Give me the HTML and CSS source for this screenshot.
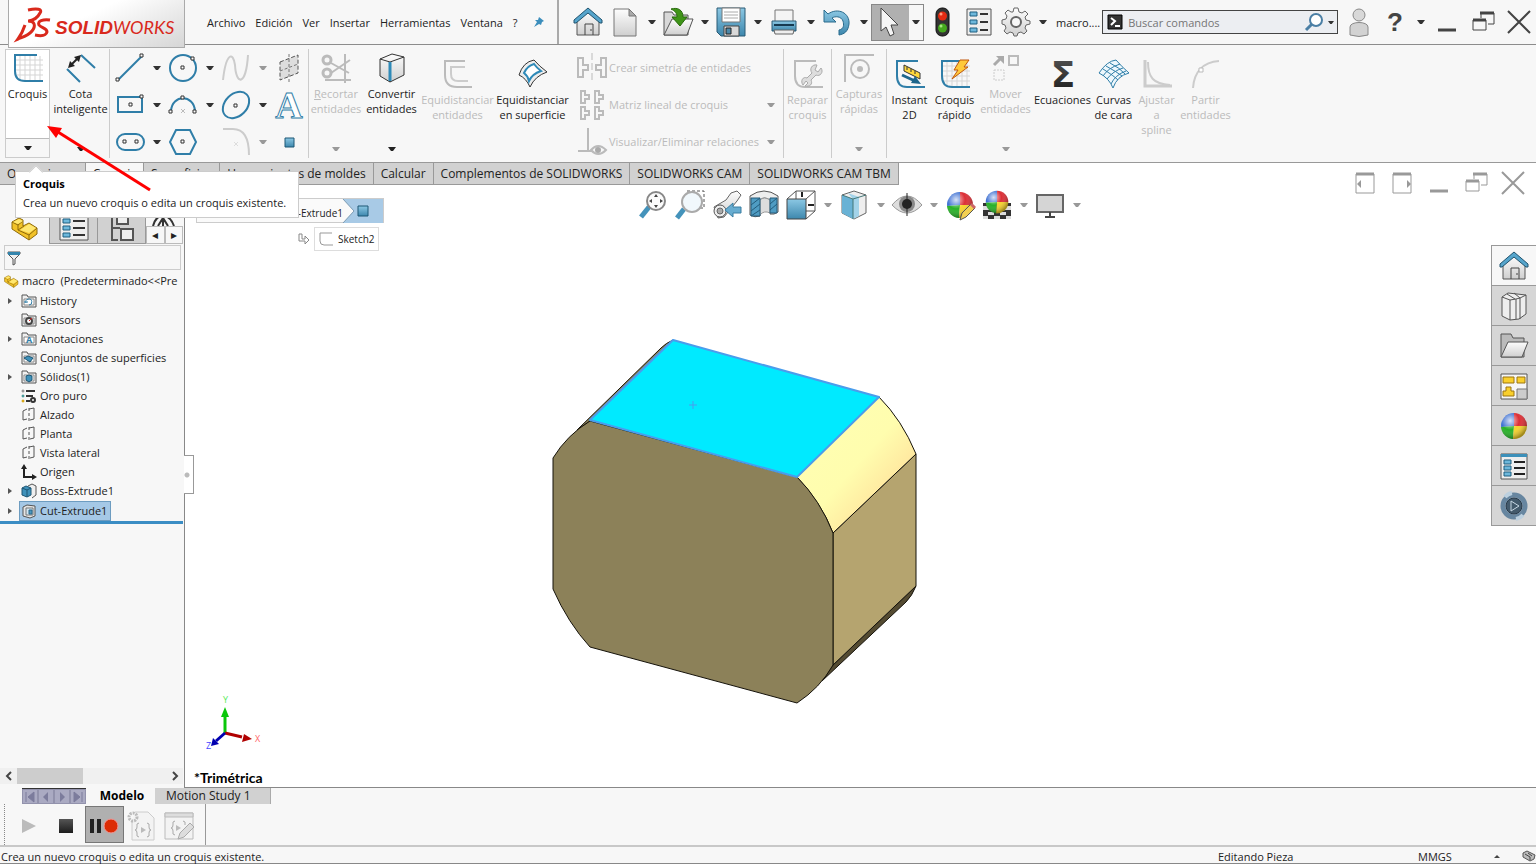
FILE: index.html
```html
<!DOCTYPE html>
<html lang="es">
<head>
  <meta charset="UTF-8">
  <title>SOLIDWORKS - macro</title>
  <link rel="stylesheet" href="styles.css">
</head>
<body>
  <!-- shared gradients and icons -->
  <svg class="defs" width="0" height="0" aria-hidden="true">
    <defs>
      <linearGradient id="blue" x1="0" y1="0" x2="0" y2="1"><stop offset="0" stop-color="#8cc8e4"/><stop offset="1" stop-color="#3d87ad"/></linearGradient>
      <linearGradient id="gray" x1="0" y1="0" x2="0" y2="1"><stop offset="0" stop-color="#fdfdfd"/><stop offset="1" stop-color="#cfcfcf"/></linearGradient>
      <linearGradient id="dark" x1="0" y1="0" x2="0" y2="1"><stop offset="0" stop-color="#555"/><stop offset="1" stop-color="#1c1c1c"/></linearGradient>
      <linearGradient id="gold" x1="0" y1="0" x2="1" y2="1"><stop offset="0" stop-color="#ffffb4"/><stop offset="0.5" stop-color="#fffdae"/><stop offset="0.8" stop-color="#ffe09a"/></linearGradient>
      <radialGradient id="shine" cx="0.35" cy="0.3" r="0.7"><stop offset="0" stop-color="#fff" stop-opacity="0.8"/><stop offset="0.5" stop-color="#fff" stop-opacity="0"/><stop offset="1" stop-color="#000" stop-opacity="0.35"/></radialGradient>
      <symbol id="dd" viewBox="0 0 8 4"><path d="M0 0H8L5 4H3Z" fill="currentColor"/></symbol>
      <symbol id="home" viewBox="0 0 30 30"><path d="M4 14V28H26V14L15 4Z" fill="url(#gray)" stroke="#555"/><path d="M12 28V17H20V28M18 22V24" fill="none" stroke="#444"/><path d="M1 16V13L15 1L29 13V16H27L15 6L3 16Z" fill="#56a5cc" stroke="#20536e"/></symbol>
      <symbol id="ball" viewBox="0 0 30 30"><path d="M15 15V2A13 13 0 0 0 2 16Z" fill="#3c6fd2"/><path d="M15 15V2A13 13 0 0 1 28 15Z" fill="#dc2f36"/><path d="M15 15L2 16A13 13 0 0 0 14 28Z" fill="#28b128"/><path d="M15 15L28 15A13 13 0 0 1 14 28Z" fill="#f7d32c"/><circle cx="15" cy="15" r="13" fill="url(#shine)"/></symbol>
      <symbol id="list" viewBox="0 0 30 30"><path d="M3 2H27V28H3Z" fill="#eee" stroke="#555"/><path d="M6 5H13V9H6ZM6 13H13V17H6ZM6 21H13V25H6Z" fill="#6db8dc" stroke="#1e5f80"/><path d="M16 7H24M16 15H24M16 23H24" stroke="#333" stroke-width="2"/></symbol>
      <symbol id="restore" viewBox="0 0 30 30"><path d="M13 11V6H26V17H20M5 13H18V23H5Z" fill="none" stroke="currentColor"/><path d="M12 6H26M5 13H18" stroke="currentColor" stroke-width="3"/></symbol>
      <symbol id="close" viewBox="0 0 30 30"><path d="M4 4L26 26M26 4L4 26" stroke="currentColor" stroke-width="2"/></symbol>
      <symbol id="min" viewBox="0 0 30 30"><path d="M6 23H24" stroke="currentColor" stroke-width="3"/></symbol>
      <symbol id="part" viewBox="0 0 28 28"><path d="M1 9L8 5L12 7V13L18 10L26 15V21L18 27L1 16Z" fill="#f2c228" stroke="#8d6a0c"/><path d="M1 9L7 12V17L18 22V27M7 12L12 8M18 22L26 15M7 17L13 13" fill="none" stroke="#8d6a0c"/><path d="M2 9L8 6L12 8L7 11ZM9 17L18 11L25 15L18 20Z" fill="#ffe770"/></symbol>
      <symbol id="folder" viewBox="0 0 16 16"><path d="M1 2H6L7 4H15V14H1Z" fill="#f0f0f0" stroke="#555"/><path d="M3 6H13V12H3Z" fill="#fff" stroke="#888"/></symbol>
      <symbol id="plane" viewBox="0 0 16 16"><path d="M6 2L2 4V13L6 12M8 2L13 1V12L9 13" fill="none" stroke="#555"/><path d="M8 1V15" stroke="#555" stroke-dasharray="3 2"/></symbol>
      <symbol id="tri" viewBox="0 0 4 6"><path d="M0 0L4 3L0 6Z" fill="#555"/></symbol>
    </defs>
  </svg>

  <header class="titlebar">
    <a class="logo" href="#">
      <svg width="34" height="34" viewBox="0 0 34 34" fill="none" stroke="#d9291c"><path d="M11 3C20 1 26 2 23 6C21 10 17 13 12 14" stroke-width="3"/><path d="M11 14C18 14 19 19 15 24C11 29 6 30 1 32C4 28 6 24 8 18" stroke-width="3"/><path d="M33 13C26 12 20 14 22 18C24 21 30 21 30 25C29 29 23 29 18 28" stroke-width="3"/></svg>
      <span class="wordmark"><b>SOLID</b>WORKS</span>
    </a>
    <nav class="menu">
      <a href="#">Archivo</a><a href="#">Edición</a><a href="#">Ver</a><a href="#">Insertar</a><a href="#">Herramientas</a><a href="#">Ventana</a><a href="#">?</a>
      <svg class="pin" width="12" height="12" viewBox="0 0 12 12"><path d="M6 1L11 5L9 6L8 9L6 8L1 11L4 6L2 4L5 4Z" fill="#3c8ebc"/></svg>
    </nav>
    <div class="quick">
      <button aria-label="Inicio"><svg class="ic"><use href="#home"/></svg></button>
      <button class="new" aria-label="Nuevo"><svg class="ic" viewBox="0 0 30 30"><path d="M4 2H19L26 9V29H4Z" fill="url(#gray)" stroke="#777"/><path d="M19 2V9H26Z" fill="#aaa" stroke="#777"/></svg></button>
      <button class="dd" aria-label="Más"><svg><use href="#dd"/></svg></button>
      <button aria-label="Abrir"><svg class="ic" viewBox="0 0 30 30"><path d="M1 28V5H9L11 8H25V28Z" fill="#d8d8d8" stroke="#555"/><path d="M1 28L9 12H30L24 28Z" fill="url(#gray)" stroke="#555"/><path d="M8 2C15 0 20 3 20 10H24L17 19L9 10H14C14 6 12 4 8 2Z" fill="#3f9418" stroke="#276a0b"/></svg></button>
      <button class="dd" aria-label="Más"><svg><use href="#dd"/></svg></button>
      <button aria-label="Guardar"><svg class="ic" viewBox="0 0 30 30"><path d="M1 1H29V29H5L1 25Z" fill="url(#blue)" stroke="#2a5a75"/><path d="M6 1H24V15H6Z" fill="#fff" stroke="#777"/><path d="M8 5H22M8 8H22M8 11H22" stroke="#aaa"/><path d="M8 19H23V29H8Z" fill="#d9d9d9" stroke="#444"/><path d="M10 21H15V27H10Z" fill="#4d88a8" stroke="#222"/></svg></button>
      <button class="dd" aria-label="Más"><svg><use href="#dd"/></svg></button>
      <button aria-label="Imprimir"><svg class="ic" viewBox="0 0 30 30"><path d="M6 15V3H24V15" fill="#f4f4f4" stroke="#777"/><path d="M3 14H27V24H3Z" fill="url(#blue)" stroke="#2a5a75"/><path d="M5 18H25" stroke="#173a50" stroke-width="2"/><path d="M5 23H25L24 27H6Z" fill="#eee" stroke="#666"/></svg></button>
      <button class="dd" aria-label="Más"><svg><use href="#dd"/></svg></button>
      <button aria-label="Deshacer"><svg class="ic" viewBox="0 0 30 30"><path d="M2 3L6 7C16 0 28 6 27 17C26 25 22 27 17 28V23C22 22 22 18 21 14C19 9 13 9 10 11L14 15L2 15Z" fill="url(#blue)" stroke="#296a8c"/></svg></button>
      <button class="dd" aria-label="Más"><svg><use href="#dd"/></svg></button>
      <span class="select">
        <button class="pressed" aria-label="Seleccionar"><svg class="ic" viewBox="0 0 30 30"><path d="M7 1V24L12 20L16 29L20 27L17 18H24Z" fill="#f5f5f5" stroke="#444"/></svg></button>
        <button class="dd" aria-label="Más"><svg><use href="#dd"/></svg></button>
      </span>
      <button aria-label="Reconstruir"><svg class="ic" viewBox="0 0 30 30"><rect x="9" y="1" width="13" height="28" rx="6" fill="#333" stroke="#111"/><circle cx="15.500" cy="9" r="4.500" fill="#e32b12"/><circle cx="15.500" cy="21" r="4.500" fill="#45a81d"/><circle cx="14" cy="7" r="1.500" fill="#ff9c80"/><circle cx="14" cy="19" r="1.500" fill="#a3e87f"/></svg></button>
      <button class="spaced" aria-label="Propiedades"><svg class="ic"><use href="#list"/></svg></button>
      <button class="spaced" aria-label="Opciones"><svg class="ic" viewBox="0 0 30 30"><path d="M13 1H17L18 5L21 6L24 4L27 7L24 10L25 13L29 14V17L25 18L24 21L26 24L23 27L20 25L17 26L16 29H13L12 26L9 25L6 27L3 24L5 21L4 18L1 17V13L5 12L6 9L4 6L7 3L10 5L12 5Z" fill="url(#gray)" stroke="#666"/><circle cx="15" cy="15" r="5" fill="#f7f7f7" stroke="#666" stroke-width="2"/></svg></button>
      <button class="dd" aria-label="Más"><svg><use href="#dd"/></svg></button>
    </div>
    <span class="doc">macro....</span>
    <form class="search">
      <svg width="16" height="16" viewBox="0 0 16 16"><path d="M1 1H15V15H1Z" fill="#333" stroke="#000"/><path d="M4 4L8 7L4 11M8 12H13" fill="none" stroke="#fff" stroke-width="2"/></svg>
      <input type="text" placeholder="Buscar comandos" aria-label="Buscar comandos">
      <svg width="20" height="20" viewBox="0 0 20 20"><path d="M8 12L2 18" stroke="#4b7fa5" stroke-width="3"/><circle cx="12" cy="8" r="6" fill="#fff" stroke="#4b7fa5" stroke-width="2"/></svg>
      <button class="dd" type="button" aria-label="Más"><svg><use href="#dd"/></svg></button>
    </form>
    <div class="window">
      <button aria-label="Usuario"><svg class="ic" viewBox="0 0 30 30"><path d="M6 28V20C6 14 24 14 24 20V28Q15 31 6 28Z" fill="#d2d2d2" stroke="#888"/><circle cx="15" cy="8" r="6" fill="#d8d8d8" stroke="#888"/></svg></button>
      <button class="help" aria-label="Ayuda">?</button>
      <button class="dd" aria-label="Más"><svg><use href="#dd"/></svg></button>
      <button aria-label="Minimizar"><svg class="ic"><use href="#min"/></svg></button>
      <button aria-label="Restaurar"><svg class="ic"><use href="#restore"/></svg></button>
      <button aria-label="Cerrar"><svg class="ic"><use href="#close"/></svg></button>
    </div>
  </header>

  <div class="ribbon">
    <div class="group first">
      <button class="cmd narrow hot"><svg class="ic" viewBox="0 0 30 30"><path d="M7 3V27M12 3V27M17 3V27M22 3V27M27 3V27M3 7H30M3 12H30M3 17H30M3 22H30" stroke="#d5d5d5"/><path d="M24 2H2V18Q2 28 12 28H30" fill="none" stroke="#2f7ea8" stroke-width="2"/></svg>Croquis<span class="drop"><svg><use href="#dd"/></svg></span></button>
      <button class="cmd wide"><svg class="ic" viewBox="0 0 30 30"><path d="M15 2L29 15M1 16L14 29" stroke="#2f7ea8" stroke-width="2"/><path d="M4 13L13 4" stroke="#222" stroke-width="2"/><path d="M2 15L4 8L9 13ZM15 2L13 9L8 4Z" fill="#222"/></svg>Cota<br>inteligente<span class="drop"><svg><use href="#dd"/></svg></span></button>
    </div>
    <div class="group tools">
      <button aria-label="Línea"><svg class="ic" viewBox="0 0 30 30"><path d="M3 27L27 3" stroke="#2f7ea8" stroke-width="2"/><path d="M1 25H4V28H1ZM25 1H28V4H25Z" fill="#fff" stroke="#333"/></svg></button>
      <button class="dd" aria-label="Más"><svg><use href="#dd"/></svg></button>
      <button aria-label="Círculo"><svg class="ic" viewBox="0 0 30 30"><circle cx="15" cy="15" r="13" fill="none" stroke="#2f7ea8" stroke-width="2"/><path d="M13 13H16V16H13ZM23 4H26V7H23Z" fill="#fff" stroke="#333"/></svg></button>
      <button class="dd" aria-label="Más"><svg><use href="#dd"/></svg></button>
      <button disabled aria-label="Spline"><svg class="ic" viewBox="0 0 30 30"><path d="M2 27C5 0 12 -2 14 12C15 32 25 34 27 2" fill="none" stroke="#ccc" stroke-width="2"/></svg></button>
      <button class="dd" disabled aria-label="Más"><svg><use href="#dd"/></svg></button>
      <button aria-label="Plano"><svg class="ic" viewBox="0 0 30 30"><path d="M6 9L24 2V20L6 27Z" fill="#ddd" stroke="#555" stroke-dasharray="4 2"/><path d="M15 1V29M6 18L24 11" stroke="#777" stroke-dasharray="3 2"/></svg></button>

      <button aria-label="Rectángulo"><svg class="ic" viewBox="0 0 30 30"><path d="M3 7H27V22H3Z" fill="none" stroke="#2f7ea8" stroke-width="2"/><path d="M14 13H17V16H14ZM25 5H28V8H25Z" fill="#fff" stroke="#333"/></svg></button>
      <button class="dd" aria-label="Más"><svg><use href="#dd"/></svg></button>
      <button aria-label="Arco"><svg class="ic" viewBox="0 0 30 30"><path d="M3 21C4 4 26 4 27 21" fill="none" stroke="#2f7ea8" stroke-width="2"/><path d="M13 6H16V9H13ZM1 20H4V23H1ZM25 20H28V23H25Z" fill="#fff" stroke="#333"/><path d="M13 19L17 23M17 19L13 23" stroke="#bbb"/></svg></button>
      <button class="dd" aria-label="Más"><svg><use href="#dd"/></svg></button>
      <button aria-label="Elipse"><svg class="ic" viewBox="0 0 30 30"><ellipse cx="15" cy="15" rx="15" ry="11" transform="rotate(-45 15 15)" fill="none" stroke="#2f7ea8" stroke-width="2"/><path d="M13 14H16V17H13Z" fill="#fff" stroke="#333"/></svg></button>
      <button class="dd" aria-label="Más"><svg><use href="#dd"/></svg></button>
      <button aria-label="Texto"><svg class="ic" viewBox="0 0 30 30"><text x="15" y="28" text-anchor="middle" font-family="Liberation Serif, serif" font-weight="bold" font-size="38" fill="#fff" stroke="#2f7ea8">A</text></svg></button>

      <button aria-label="Ranura"><svg class="ic" viewBox="0 0 30 30"><rect x="2" y="7" width="27" height="16" rx="8" fill="none" stroke="#2f7ea8" stroke-width="2"/><path d="M8 13H11V16H8ZM20 13H23V16H20Z" fill="#fff" stroke="#333"/></svg></button>
      <button class="dd" aria-label="Más"><svg><use href="#dd"/></svg></button>
      <button aria-label="Polígono"><svg class="ic" viewBox="0 0 30 30"><path d="M8 3H22L28 15L22 27H8L2 15Z" fill="none" stroke="#2f7ea8" stroke-width="2"/><path d="M13 13H16V16H13Z" fill="#fff" stroke="#333"/></svg></button>
      <span></span>
      <button disabled aria-label="Redondeo"><svg class="ic" viewBox="0 0 30 30"><path d="M2 2H12C24 2 28 12 28 28" fill="none" stroke="#ccc" stroke-width="2"/><path d="M13 15L17 19M17 15L13 19" stroke="#ddd"/></svg></button>
      <button class="dd" disabled aria-label="Más"><svg><use href="#dd"/></svg></button>
      <button aria-label="Punto"><svg class="ic" viewBox="0 0 30 30"><path d="M11 11H20V20H11Z" fill="url(#blue)" stroke="#1c5675"/></svg></button>
    </div>
    <div class="group">
      <button class="cmd middle" disabled><svg class="ic" viewBox="0 0 30 30"><path d="M10 10L28 20M10 20L29 7M4 27H30M24 1V30" stroke="#bbb" stroke-width="2"/><circle cx="6" cy="7" r="4" fill="none" stroke="#bbb" stroke-width="3"/><circle cx="6" cy="20" r="4" fill="none" stroke="#bbb" stroke-width="3"/></svg><span><u>R</u>ecortar</span>entidades<span class="drop"><svg><use href="#dd"/></svg></span></button>
      <button class="cmd wide"><svg class="ic" viewBox="0 0 30 30"><path d="M3 6L15 1L27 4V22L13 29L3 23Z" fill="url(#gray)" stroke="#333"/><path d="M3 6L13 9L27 4M13 9V29" fill="none" stroke="#333"/><path d="M13 9V28" stroke="#2f8ab8" stroke-width="3"/></svg>Convertir<br>entidades<span class="drop"><svg><use href="#dd"/></svg></span></button>
      <button class="cmd low wider" disabled><svg class="ic" viewBox="0 0 30 30"><path d="M22 2H2V16Q2 28 14 28H29" fill="none" stroke="#bbb" stroke-width="2"/><path d="M22 8H8V15Q8 22 15 22H25" fill="none" stroke="#ccc" stroke-width="2"/></svg>Equidistanciar<br>entidades</button>
      <button class="cmd low wider"><svg class="ic" viewBox="0 0 30 30"><path d="M1 16Q5 3 16 1Q21 7 29 13Q17 17 12 28Q8 19 1 16Z" fill="#eee" stroke="#333"/><path d="M6 14Q9 7 16 5Q19 9 23 12Q14 15 11 22Q10 17 6 14Z" fill="#fff" stroke="#2f8ab8" stroke-width="2"/></svg>Equidistanciar<br>en superficie</button>
      <div class="rows">
        <button disabled><svg class="ic" viewBox="0 0 30 30"><path d="M1 5H6V12H11V17H6V24H1ZM29 5H24V12H19V17H24V24H29Z" fill="none" stroke="#bbb" stroke-width="2"/><path d="M15 0V30" stroke="#bbb" stroke-dasharray="7 3"/></svg><span>Crear simetría de entidades</span></button>
        <button disabled><svg class="ic" viewBox="0 0 30 30"><path d="M4 1H8V5H12V9H8V13H4ZM18 1H22V5H26V9H22V13H18ZM4 17H8V21H12V25H8V29H4ZM18 17H22V21H26V25H22V29H18Z" fill="none" stroke="#bbb" stroke-width="2"/></svg><span>Matriz lineal de croquis</span><svg class="tip"><use href="#dd"/></svg></button>
        <button disabled><svg class="ic" viewBox="0 0 30 30"><path d="M11 1V24M1 24H15" stroke="#bbb" stroke-width="2"/><path d="M14 23Q21 15 29 23Q21 31 14 23Z" fill="none" stroke="#bbb" stroke-width="2"/><circle cx="21" cy="23" r="3" fill="#aaa"/></svg><span>Visualizar/Eliminar relaciones</span><svg class="tip"><use href="#dd"/></svg></button>
      </div>
    </div>
    <div class="group padded">
      <button class="cmd low narrow" disabled><svg class="ic" viewBox="0 0 30 30"><path d="M23 2H2V17Q2 28 12 28H30" fill="none" stroke="#bbb" stroke-width="2"/><path d="M24 6C19 5 16 10 19 14L14 19C10 17 7 22 10 26L13 22L15 24L12 27C17 28 20 25 18 21L23 16C27 18 31 13 28 9L25 13L22 11Z" fill="#ddd" stroke="#aaa"/></svg>Reparar<br>croquis</button>
    </div>
    <div class="group">
      <button class="cmd middle" disabled><svg class="ic" viewBox="0 0 30 30"><path d="M1 29V2H30" fill="none" stroke="#bbb" stroke-width="2"/><circle cx="16" cy="16" r="9" fill="none" stroke="#bbb" stroke-width="2"/><circle cx="16" cy="16" r="3" fill="#bbb"/></svg>Capturas<br>rápidas<span class="drop"><svg><use href="#dd"/></svg></span></button>
    </div>
    <div class="group">
      <button class="cmd low narrow"><svg class="ic" viewBox="0 0 30 30"><path d="M23 2H2V17Q2 28 12 28H30" fill="none" stroke="#2f7ea8" stroke-width="2"/><path d="M9 6L25 14V20L9 12Z" fill="#ffd83c" stroke="#333"/><path d="M12 8V11M16 10V13M20 12V15" stroke="#333"/><path d="M7 16L20 22" stroke="#1d668c" stroke-width="3"/><path d="M26 25L16 24L20 17Z" fill="#1d668c"/></svg>Instant<br>2D</button>
      <button class="cmd low narrow"><svg class="ic" viewBox="0 0 30 30"><path d="M7 3V27M12 3V27M17 3V27M22 3V27M27 3V27M3 7H30M3 12H30M3 17H30M3 22H30" stroke="#d5d5d5"/><path d="M20 2H2V17Q2 28 12 28H30" fill="none" stroke="#2f7ea8" stroke-width="2"/><path d="M20 1H29L24 8H28L12 20L18 11H14Z" fill="#ffc93a" stroke="#c0560c"/></svg>Croquis<br>rápido</button>
      <button class="cmd wide" disabled><svg class="ic" viewBox="0 0 30 30"><path d="M18 3H27V12H18Z" fill="none" stroke="#bbb" stroke-width="2"/><path d="M3 12L9 6" stroke="#aaa" stroke-width="3"/><path d="M5 3H13V11Z" fill="#aaa"/><path d="M3 17H13V27H3Z" fill="none" stroke="#ccc" stroke-dasharray="2 1"/></svg>Mover<br>entidades<span class="drop"><svg><use href="#dd"/></svg></span></button>
      <button class="cmd low wide"><svg class="ic" viewBox="0 0 30 30"><text x="15" y="28" text-anchor="middle" font-family="DejaVu Sans, sans-serif" font-weight="bold" font-size="36" fill="url(#dark)">Σ</text></svg>Ecuaciones</button>
      <button class="cmd low narrow"><svg class="ic" viewBox="0 0 30 30"><path d="M0 14Q8 2 17 1Q23 8 30 14Q18 17 14 29Q10 19 0 14Z" fill="#edf7fc" stroke="#2f7ea8"/><path d="M4 10Q15 17 19 21M7 7Q18 13 23 17M11 4Q21 9 26 15M4 17Q9 9 21 5M8 20Q14 12 24 9M12 25Q16 16 27 12" fill="none" stroke="#2f7ea8"/></svg>Curvas<br>de cara</button>
      <button class="cmd low slim" disabled><svg class="ic" viewBox="0 0 30 30"><path d="M3 1V27H30" fill="none" stroke="#ccc" stroke-width="3"/><path d="M6 3C6 18 11 25 28 26" fill="none" stroke="#ccc" stroke-width="2"/></svg>Ajustar<br>a<br>spline</button>
      <button class="cmd low wide" disabled><svg class="ic" viewBox="0 0 30 30"><path d="M2 29C3 13 12 3 28 2" fill="none" stroke="#ccc" stroke-width="2"/><path d="M8 9H12V13H8Z" fill="#fff" stroke="#bbb"/></svg>Partir<br>entidades</button>
    </div>
  </div>

  <nav class="tabs">
    <a href="#">Operaciones</a><a href="#" class="active">Croquis</a><a href="#">Superficies</a><a href="#">Herramientas de moldes</a><a href="#">Calcular</a><a href="#">Complementos de SOLIDWORKS</a><a href="#">SOLIDWORKS CAM</a><a href="#">SOLIDWORKS CAM TBM</a>
  </nav>

  <main class="workspace">
    <aside class="panel">
      <div class="panel-tabs">
        <button class="active" aria-label="Árbol"><svg width="28" height="28"><use href="#part"/></svg></button>
        <button aria-label="Propiedades"><svg width="30" height="28" viewBox="0 0 30 28"><path d="M1 1H29V25H1Z" fill="#eee" stroke="#555"/><path d="M4 4H11V8H4ZM4 11H11V15H4ZM4 18H11V22H4Z" fill="#6db8dc" stroke="#1e5f80"/><path d="M14 6H26M14 13H26M14 20H26" stroke="#333" stroke-width="2"/></svg></button>
        <button aria-label="Configuraciones"><svg width="28" height="28" viewBox="0 0 28 28"><path d="M4 2V25H10M4 13H12" fill="none" stroke="#555" stroke-width="2"/><path d="M9 2H20V9H9ZM13 14H25V25H13Z" fill="#eee" stroke="#555" stroke-width="2"/></svg></button>
        <div class="more">
          <svg width="34" height="12" viewBox="0 0 34 12"><path d="M7 12Q9 3 17 1Q25 3 28 12M17 1V12M12 12L17 4L22 12" fill="none" stroke="#333" stroke-width="2"/></svg>
          <div class="spin"><button aria-label="Anterior">◂</button><button aria-label="Siguiente">▸</button></div>
        </div>
      </div>
      <div class="filter"><svg width="14" height="16" viewBox="0 0 14 16"><path d="M1 2H13V4L8 9V14L6 15V9L1 4Z" fill="#eee" stroke="#555"/><path d="M1 2H13V5H1Z" fill="#3485ad"/></svg><input type="text" aria-label="Filtro"></div>
      <p class="root"><svg width="15" height="15"><use href="#part"/></svg>macro&nbsp; (Predeterminado&lt;&lt;Pre</p>
      <ul class="tree">
        <li class="open"><svg class="twig"><use href="#tri"/></svg><span><svg width="16" height="16"><use href="#folder"/><path d="M5 10A3 3 0 1 1 8 12M3 9H7" fill="none" stroke="#2f7ea8"/></svg>History</span></li>
        <li><span><svg width="16" height="16"><use href="#folder"/><circle cx="8" cy="9" r="3" fill="#fff" stroke="#444" stroke-width="2"/><path d="M8 9L11 6" stroke="#d22"/></svg>Sensors</span></li>
        <li class="open"><svg class="twig"><use href="#tri"/></svg><span><svg width="16" height="16"><use href="#folder"/><text x="8" y="12" text-anchor="middle" font-size="9" font-weight="bold" fill="#2f7ea8">A</text></svg>Anotaciones</span></li>
        <li><span><svg width="16" height="16"><use href="#folder"/><path d="M3 8L7 6L12 8L9 12Z" fill="#3f91ba" stroke="#1d5674"/></svg>Conjuntos de superficies</span></li>
        <li class="open"><svg class="twig"><use href="#tri"/></svg><span><svg width="16" height="16"><use href="#folder"/><path d="M5 7L8 6L11 7V11L8 13L5 11Z" fill="#3f91ba" stroke="#1d5674"/></svg>Sólidos(1)</span></li>
        <li><span><svg width="16" height="16"><path d="M5 3H14M5 8H12M5 13H9" stroke="#333" stroke-width="2"/><circle cx="2" cy="3" r="1" fill="#fff" stroke="#777"/><circle cx="2" cy="8" r="1" fill="#6cc" stroke="#388"/><circle cx="2" cy="13" r="1" fill="#fc3" stroke="#c90"/><circle cx="12" cy="12" r="2" fill="none" stroke="#333" stroke-width="2"/></svg>Oro puro</span></li>
        <li><span><svg width="16" height="16"><use href="#plane"/></svg>Alzado</span></li>
        <li><span><svg width="16" height="16"><use href="#plane"/></svg>Planta</span></li>
        <li><span><svg width="16" height="16"><use href="#plane"/></svg>Vista lateral</span></li>
        <li><span><svg width="16" height="16"><path d="M3 3V13H13" fill="none" stroke="#222" stroke-width="2"/><path d="M3 0L6 5H0ZM16 13L11 10V16Z" fill="#222"/></svg>Origen</span></li>
        <li class="open"><svg class="twig"><use href="#tri"/></svg><span><svg width="16" height="16"><path d="M7 3L11 1L15 3V12L11 15" fill="#eee" stroke="#555"/><path d="M1 5L5 3L10 5V12L6 14L1 12Z" fill="#3f91ba" stroke="#1d5674"/><path d="M1 5L6 7L10 5M6 7V14" fill="none" stroke="#1d5674"/></svg>Boss-Extrude1</span></li>
        <li class="open selected"><svg class="twig"><use href="#tri"/></svg><span><svg width="16" height="16"><path d="M2 4L6 2L14 3V13L9 15L2 13Z" fill="#e4e4e4" stroke="#555"/><path d="M5 5H12V12H5Z" fill="#d2e6f2" stroke="#777"/><path d="M8 7H11V11H8Z" fill="#4a97bf" stroke="#2a6788"/></svg>Cut-Extrude1</span></li>
      </ul>
      <div class="hscroll"><button aria-label="Izquierda"><svg width="6" height="8"><path d="M5 0L1 4L5 8" fill="none" stroke="#444" stroke-width="2"/></svg></button><span class="track"><span class="thumb"></span></span><button aria-label="Derecha"><svg width="6" height="8"><path d="M1 0L5 4L1 8" fill="none" stroke="#444" stroke-width="2"/></svg></button></div>
      <span class="handle"></span>
    </aside>

    <section class="viewport">
      <div class="crumbs">
        <div class="crumb-bar"><span class="crumb">-Extrude1</span><svg width="40" height="24" viewBox="0 0 40 24"><path d="M0 0H40V24H0L11 12Z" fill="#a8cae6"/><path d="M0 0L11 12L0 24" fill="none" stroke="#7d9db5"/><path d="M15 7H25V17H15Z" fill="url(#blue)" stroke="#1c5675"/></svg></div>
        <div class="crumb-sub"><svg width="12" height="12" viewBox="0 0 12 12"><path d="M1 1H4V6H7V3L11 7L7 11V8H1Z" fill="#fff" stroke="#888"/></svg><span class="sketch"><svg width="16" height="16"><path d="M14 2H2V10Q2 14 6 14H15" fill="none" stroke="#999"/></svg>Sketch2</span></div>
      </div>

      <div class="heads-up">
        <button aria-label="Zoom para ajustar"><svg class="ic" viewBox="0 0 30 30"><path d="M11 17L3 27" stroke="#4493bb" stroke-width="5"/><circle cx="18" cy="11" r="9" fill="#fbfbfb" stroke="#888" stroke-width="2"/><path d="M18 4L20 7H16ZM18 18L20 15H16ZM11 11L14 9V13ZM25 11L22 9V13Z" fill="#444"/></svg></button>
        <button aria-label="Zoom a área"><svg class="ic" viewBox="0 0 30 30"><path d="M12 1H29V18H22" fill="none" stroke="#555" stroke-dasharray="3 2"/><path d="M9 19L2 28" stroke="#4493bb" stroke-width="5"/><circle cx="17" cy="12" r="10" fill="#f1f8fc" stroke="#aaa" stroke-width="2"/></svg></button>
        <button aria-label="Vista previa"><svg class="ic" viewBox="0 0 30 30"><path d="M2 17L14 10L19 3L25 1L29 5L25 11L12 27L6 28Z" fill="url(#gray)" stroke="#666"/><circle cx="8" cy="21" r="6" fill="#eee" stroke="#555"/><circle cx="8" cy="21" r="3" fill="#aaa" stroke="#666"/><path d="M29 17H21V13L13 20L21 27V23H29Z" fill="#67acd0" stroke="#3a7ea2"/></svg></button>
        <button aria-label="Sección"><svg class="ic" viewBox="0 0 30 30"><path d="M1 6Q15 -4 29 6V22Q25 25 21 24V10Q15 6 11 10V26Q6 28 1 25Z" fill="#eee" stroke="#555"/><path d="M11 10Q15 6 21 10V23Q15 20 11 25Z" fill="#ddd" stroke="#999"/><path d="M2 8H11V26H2ZM21 8H28V23H21Z" fill="#4f9cc3" stroke="#265b78"/><path d="M2 15L11 8M2 21L11 14M2 26L11 20M21 14L28 8M21 20L28 14" stroke="#225b7b"/></svg></button>
        <button aria-label="Orientación"><svg class="ic" viewBox="0 0 30 30"><path d="M1 9L10 1H29V21L20 29M10 1V9M20 9L29 1M20 21H29" fill="#fff" stroke="#555"/><path d="M1 9H20V29H1Z" fill="url(#blue)" stroke="#444"/><path d="M16 2V7M28 15H22" stroke="#222" stroke-width="2"/></svg></button>
        <button class="dd" aria-label="Más"><svg><use href="#dd"/></svg></button>
        <button aria-label="Estilo"><svg class="ic" viewBox="0 0 30 30"><path d="M3 5L15 1L27 5V23L15 29L3 23Z" fill="#eee" stroke="#666"/><path d="M3 5L14 9V29L3 23Z" fill="#69b2d5"/><path d="M9 3L20 7V26L14 29V9Z" fill="#a3d3e9"/><path d="M3 5L14 9L27 5M14 9V29" fill="none" stroke="#477"/></svg></button>
        <button class="dd" aria-label="Más"><svg><use href="#dd"/></svg></button>
        <button aria-label="Ocultar"><svg class="ic" viewBox="0 0 30 30"><path d="M0 15Q15 -3 30 15Q15 31 0 15Z" fill="#ddd" stroke="#999"/><circle cx="15" cy="14" r="8" fill="#888"/><circle cx="15" cy="14" r="5" fill="#222"/><path d="M15 3V26" stroke="#222"/></svg></button>
        <button class="dd" aria-label="Más"><svg><use href="#dd"/></svg></button>
        <button aria-label="Apariencia"><svg class="ic" viewBox="0 0 30 30"><use href="#ball"/><path d="M15 30L17 23L26 14L30 18L21 27Z" fill="#f2cf51" stroke="#555"/><path d="M26 14L30 18" stroke="#c66" stroke-width="3"/></svg></button>
        <button class="scene" aria-label="Escena"><svg class="ic" viewBox="0 0 30 30"><path d="M1 13H29V29H1Z" fill="#333"/><path d="M1 16H7V20H1ZM22 16H29V20H22ZM6 22H12V25H6ZM18 22H24V25H18ZM1 26H6V29H1ZM12 26H18V29H12ZM24 26H29V29H24Z" fill="#ddd"/><svg x="2" y="-1" width="26" height="26"><use href="#ball"/></svg></svg></button>
        <button class="dd" aria-label="Más"><svg><use href="#dd"/></svg></button>
        <button aria-label="Vista"><svg class="ic" viewBox="0 0 30 30"><path d="M2 5H28V22H2Z" fill="#d5d5d5" stroke="#666" stroke-width="2"/><path d="M15 22V27M10 27H20" stroke="#444" stroke-width="2"/></svg></button>
        <button class="dd" aria-label="Más"><svg><use href="#dd"/></svg></button>
      </div>

      <div class="doc-window">
        <button aria-label="Panel izquierdo"><svg class="ic" viewBox="0 0 30 30"><path d="M6 6H24V25H6Z" fill="none" stroke="#999"/><path d="M6 6H24" stroke="#999" stroke-width="3"/><path d="M7 16L11 12V20Z" fill="#999"/></svg></button>
        <button aria-label="Panel derecho"><svg class="ic" viewBox="0 0 30 30"><path d="M6 6H24V25H6Z" fill="none" stroke="#999"/><path d="M6 6H24" stroke="#999" stroke-width="3"/><path d="M24 16L20 12V20Z" fill="#999"/></svg></button>
        <button aria-label="Minimizar"><svg class="ic"><use href="#min"/></svg></button>
        <button aria-label="Restaurar"><svg class="ic"><use href="#restore"/></svg></button>
        <button aria-label="Cerrar"><svg class="ic"><use href="#close"/></svg></button>
      </div>

      <svg class="model" width="370" height="370" viewBox="550 337 370 370" stroke="#15120a" stroke-linejoin="round">
        <path d="M590 421L577 430L661 348Q666 343 673 340Z" fill="#8c8259"/>
        <path d="M916 586Q912 596 906 602L822 681L833 665Z" fill="#544b32"/>
        <path d="M833 533L916 454V586L833 665Z" fill="#b5a46f"/>
        <path d="M797 477L879 397Q902 420 916 454L833 533Q822 504 797 477Z" fill="url(#gold)"/>
        <path d="M590 421L797 477Q820 500 833 533V665Q820 688 797 703L590 647Q568 623 553 589V458Q567 435 590 421Z" fill="#8c8159"/>
        <path d="M590 420L673 340L879 397L797 477Z" fill="#00eaff" stroke="#4a9dec" stroke-width="2"/>
        <path d="M689 405H697M693 401V409" stroke="#4a9dec"/>
      </svg>

      <svg class="triad" width="60" height="56" viewBox="0 0 60 56">
        <path d="M21 38V18" stroke="#0ac70a" stroke-width="3"/><path d="M21 12L25 22H17Z" fill="#0ac70a"/>
        <path d="M21 38L38 42" stroke="#b00000" stroke-width="3"/><path d="M48 44L38 47L40 39Z" fill="#b00000"/>
        <path d="M21 38L12 46" stroke="#0000b0" stroke-width="3"/><path d="M7 51L9 43L15 49Z" fill="#0000b0"/>
        <text x="19" y="8" fill="#5bea5b">Y</text><text x="51" y="47" fill="#f66">X</text><text x="2" y="54" fill="#44f">Z</text>
      </svg>
      <p class="view-name">*Trimétrica</p>

      <div class="task-pane">
        <button class="active" aria-label="Recursos"><svg class="ic"><use href="#home"/></svg></button>
        <button aria-label="Biblioteca"><svg class="ic" viewBox="0 0 30 30"><path d="M3 6L9 2L27 4V23L20 28L11 29L3 25Z" fill="#eee" stroke="#555"/><path d="M3 6L11 9V29M11 9L17 8V28M17 8L21 7V28M21 7L27 4M8 3L16 8M15 2L21 7" fill="none" stroke="#555"/></svg></button>
        <button aria-label="Explorador"><svg class="ic" viewBox="0 0 30 30"><path d="M2 26V3H12L14 7H25V26Z" fill="#bbb" stroke="#555"/><path d="M2 26L9 11H29L23 26Z" fill="url(#gray)" stroke="#555"/></svg></button>
        <button aria-label="Paleta"><svg class="ic" viewBox="0 0 30 30"><path d="M2 3H28V28H2Z" fill="#f6f6f6" stroke="#555"/><path d="M4 6H15V12H4ZM18 6H26V12H18ZM7 16H12V20H15V25H4V20H7Z" fill="#f9cf2c" stroke="#9b7410"/><path d="M18 28V18H28V28Z" fill="#ccc" stroke="#777"/></svg></button>
        <button aria-label="Apariencias"><svg class="ic"><use href="#ball"/></svg></button>
        <button aria-label="Propiedades"><svg class="ic" viewBox="0 0 30 30"><path d="M2 3H28V28H2Z" fill="#eee" stroke="#555"/><path d="M2 3H28V6H2Z" fill="#3c90ba"/><path d="M5 9H12V13H5ZM5 15H12V19H5ZM5 21H12V25H5Z" fill="#6db8dc" stroke="#1e5f80"/><path d="M15 11H26M15 17H26M15 23H26" stroke="#222" stroke-width="2"/></svg></button>
        <button aria-label="3DEXPERIENCE"><svg class="ic" viewBox="0 0 30 30"><circle cx="15" cy="15" r="11" fill="none" stroke="#6786a0" stroke-width="5"/><path d="M6 6A12 12 0 0 1 13 2M24 24A12 12 0 0 1 17 28" fill="none" stroke="#bcd0df" stroke-width="4"/><circle cx="15" cy="15" r="8" fill="#435a6c" stroke="#26394a"/><path d="M12 10L20 15L12 20Z" fill="none" stroke="#c8d8e4"/></svg></button>
      </div>
    </section>
  </main>

  <footer>
    <nav class="sheets">
      <span class="nav-buttons"><button aria-label="Primero"><svg width="10" height="10"><path d="M1 0V10M9 0L3 5L9 10Z" fill="#7c7c9c" stroke="#7c7c9c"/></svg></button><button aria-label="Anterior"><svg width="10" height="10"><path d="M7 0L2 5L7 10Z" fill="#7c7c9c"/></svg></button><button aria-label="Siguiente"><svg width="10" height="10"><path d="M3 0L8 5L3 10Z" fill="#7c7c9c"/></svg></button><button aria-label="Último"><svg width="10" height="10"><path d="M9 0V10M1 0L7 5L1 10Z" fill="#7c7c9c" stroke="#7c7c9c"/></svg></button></span>
      <a href="#" class="active">Modelo</a><a href="#" class="study">Motion Study 1</a>
    </nav>
    <div class="macro-bar">
      <button disabled aria-label="Ejecutar"><svg class="ic" viewBox="0 0 30 30"><path d="M8 8L22 15L8 22Z" fill="#bbb"/></svg></button>
      <button aria-label="Detener"><svg class="ic" viewBox="0 0 30 30"><path d="M8 8H22V22H8Z" fill="url(#dark)"/></svg></button>
      <button class="record" aria-label="Grabar"><svg class="ic" viewBox="0 0 30 30"><path d="M3 8V22M10 8V22" stroke="#222" stroke-width="4"/><circle cx="22" cy="15" r="7" fill="#dc2c05" stroke="#e99"/></svg></button>
      <button disabled aria-label="Nueva macro"><svg class="ic" viewBox="0 0 30 30"><path d="M8 1H21L27 7V29H5V10" fill="#f3f3f3" stroke="#ccc"/><circle cx="6" cy="6" r="4" fill="none" stroke="#bbb" stroke-width="3" stroke-dasharray="2 1"/><path d="M12 12Q9 12 10 16Q10 19 8 19Q10 19 10 22Q9 26 12 26M20 12Q23 12 22 16Q22 19 24 19Q22 19 22 22Q23 26 20 26" fill="none" stroke="#aaa"/><path d="M14 16L19 19L14 22Z" fill="#bbb"/></svg></button>
      <button disabled aria-label="Editar macro"><svg class="ic" viewBox="0 0 30 30"><path d="M1 2H29V28H1Z" fill="#f3f3f3" stroke="#bbb"/><path d="M1 2H29V6H1Z" fill="#ddd" stroke="#bbb"/><path d="M11 10Q8 10 9 14Q9 17 7 17Q9 17 9 20Q8 24 11 24M19 10Q22 10 21 14" fill="none" stroke="#aaa"/><path d="M12 14L17 17L12 20Z" fill="#bbb"/><path d="M14 28L16 22L26 12L30 16L20 26Z" fill="#ddd" stroke="#aaa"/></svg></button>
    </div>
    <div class="status"><span>Crea un nuevo croquis o edita un croquis existente.</span><span class="mode">Editando Pieza</span><span class="units">MMGS</span><svg class="up" width="6" height="3"><path d="M3 0L6 3H0Z" fill="#444"/></svg><svg width="14" height="12" viewBox="0 0 14 12"><path d="M1 3L5 1L13 5L12 9L8 11L1 7Z" fill="#bbb" stroke="#555"/><path d="M3 4L8 7M6 3L10 6M8 7V10" stroke="#444"/></svg></div>
  </footer>

  <div class="tooltip" role="tooltip"><b>Croquis</b>Crea un nuevo croquis o edita un croquis existente.</div>
  <svg class="arrow" width="110" height="70" viewBox="45 122 110 70"><path d="M150 190L58 132" stroke="#f00" stroke-width="3"/><path d="M47 126L62 128L56 138Z" fill="#f00"/></svg>
</body>
</html>
```
FILE: styles.css
```css
* {
  box-sizing: border-box;
}

body {
  margin: 0;
  height: 100vh;
  display: flex;
  flex-direction: column;
  overflow: hidden;
  background: #fff;
  color: #222;
  font-family: "Open Sans", "Noto Sans", sans-serif;
  font-size: 11px;
  line-height: 15px;
}

button {
  font: inherit;
  color: inherit;
  padding: 0;
  border: 0;
  background: none;
  flex: none;
}

button svg,
a svg {
  display: block;
}

a {
  color: inherit;
  text-decoration: none;
}

svg {
  flex: none;
  overflow: visible;
}

.defs {
  position: absolute;
}

.ic {
  width: 30px;
  height: 30px;
}

.dd {
  width: 23px;
  height: 30px;
  display: flex;
  align-items: center;
  justify-content: center;
  color: #333;
}

.dd svg,
.drop svg,
.tip {
  width: 8px;
  height: 4px;
}

.dd:disabled {
  color: #999;
}

/* title bar */
.titlebar {
  height: 45px;
  flex: none;
  display: flex;
  align-items: center;
  background: #f7f7f7;
  border-bottom: 1px solid #8c8c8c;
}

.logo {
  width: 177px;
  height: 48px;
  margin: 0 0 -4px 8px;
  padding-left: 8px;
  flex: none;
  display: flex;
  align-items: center;
  gap: 4px;
  z-index: 1;
  border: 1px solid #aaa;
  border-top: 0;
  background: linear-gradient(155deg, #fff 40%, #d6d6d6);
  color: #d9291c;
}

.wordmark {
  font: italic 18px/24px Lato, sans-serif;
  padding-top: 7px;
}

.wordmark b {
  font: italic bold 19px/24px "Liberation Sans", sans-serif;
}

.menu {
  width: 374px;
  height: 44px;
  padding-left: 22px;
  flex: none;
  display: flex;
  align-items: center;
  gap: 10px;
  border-right: 2px solid #aaa;
}

.pin {
  margin-left: 5px;
}

.quick {
  display: flex;
  align-items: center;
  padding-left: 14px;
}

.new {
  margin-left: 7px;
}

.select {
  display: flex;
  height: 37px;
  margin: 0 3px 0 -4px;
  border: 1px solid #888;
}

.select .pressed {
  width: 37px;
  padding-left: 2px;
  background: #b0b0b0;
}

.select .dd {
  width: 14px;
  height: 35px;
}

.spaced {
  margin-left: 7px;
}

.doc {
  margin: 0 2px;
}

.search {
  flex: 1;
  height: 24px;
  margin: 0;
  padding-left: 4px;
  display: flex;
  align-items: center;
  gap: 5px;
  border: 1px solid #444;
  background: #eceef2;
}

.search input {
  flex: 1;
  min-width: 0;
  border: 0;
  padding: 0;
  background: none;
  font: inherit;
}

.search .dd {
  width: 12px;
  margin-left: -4px;
}

.search .dd svg {
  width: 6px;
  height: 3px;
}

.window {
  display: flex;
  align-items: center;
  padding: 0 2px 0 6px;
  gap: 6px;
  color: #444;
}

.window .dd {
  width: 10px;
}

.help {
  width: 30px;
  font: bold 26px/30px "Liberation Sans", sans-serif;
}

/* ribbon */
.ribbon {
  height: 118px;
  flex: none;
  display: flex;
  padding: 4px 5px;
  background: #f7f7f7;
  border-bottom: 1px solid #999;
}

.group {
  display: flex;
  border-right: 1px solid #ccc;
}

.first {
  gap: 2px;
}

.padded {
  padding: 0 1px;
}

.group:last-child {
  border: 0;
}

.cmd {
  display: flex;
  flex-direction: column;
  align-items: center;
  padding: 4px 0 0;
  text-align: center;
  white-space: nowrap;
}

.cmd .ic {
  margin-bottom: 3px;
}

.cmd.low {
  padding-top: 10px;
}

.narrow {
  width: 45px;
}

.slim {
  width: 41px;
}

.middle {
  width: 54px;
}

.wide {
  width: 57px;
}

.wider {
  width: 75px;
}

.drop {
  margin-top: auto;
  height: 19px;
  align-self: stretch;
  display: flex;
  align-items: center;
  justify-content: center;
}

.cmd.hot {
  padding-top: 3px;
  background: #fff;
  border: 1px solid #ccc;
}

.hot .drop {
  border-top: 1px solid #bbb;
  background: #f7f7f7;
}

.cmd:disabled,
.rows button:disabled {
  color: #bbb;
}

.cmd:disabled .drop,
.rows .tip {
  color: #999;
}

.tools {
  display: grid;
  grid-template-columns: 30px 23px 30px 23px 30px 23px 30px;
  grid-template-rows: repeat(3, 37px);
  align-items: center;
  padding: 0 4px 0 5px;
}

.rows {
  width: 206px;
  margin-left: 7px;
}

.rows button {
  width: 100%;
  height: 37px;
  display: flex;
  align-items: center;
  gap: 2px;
}

.rows .tip {
  margin: 0 8px 0 auto;
}

/* command tabs */
.tabs {
  flex: none;
  height: 22px;
  display: flex;
  font-size: 12px;
  line-height: 21px;
}

.tabs a {
  padding: 0 7px;
  background: #d1d1d1;
  border: 1px solid #999;
  border-width: 0 1px 1px 0;
}

.tabs .active {
  background: #f7f7f7;
}

.workspace {
  flex: 1;
  min-height: 0;
  display: flex;
}

/* feature tree */
.panel {
  width: 185px;
  flex: none;
  position: relative;
  display: flex;
  flex-direction: column;
  padding: 24px 1px 4px 0;
  background: #f7f7f7;
  border-right: 1px solid #888;
}

.panel-tabs {
  display: flex;
  height: 35px;
  align-items: stretch;
}

.panel-tabs > button {
  width: 48px;
  display: flex;
  justify-content: center;
  align-items: flex-end;
  background: #d1d1d1;
  border: 1px solid #999;
  border-width: 0 1px 1px 0;
}

.panel-tabs .active {
  width: 50px;
  padding-bottom: 3px;
  background: #f7f7f7;
  border-bottom: 0;
}

.more {
  flex: 1;
  padding-top: 5px;
}

.more svg {
  display: block;
}

.spin {
  display: flex;
  height: 18px;
}

.spin button {
  flex: 1;
  background: #f7f7f7;
  border: 1px solid #bbb;
  font-size: 12px;
  line-height: 14px;
}

.filter {
  height: 25px;
  margin: 1px 2px 0 4px;
  padding-left: 2px;
  display: flex;
  align-items: center;
  border: 1px solid #ccc;
}

.filter input {
  flex: 1;
  min-width: 0;
  border: 0;
  background: none;
}

.root {
  margin: 1px 0 0;
  padding-left: 4px;
  height: 19px;
  display: flex;
  align-items: center;
  gap: 3px;
  white-space: nowrap;
}

.tree {
  list-style: none;
  margin: 1px 0 0;
  padding: 0;
  border-bottom: 3px solid #3b8dc4;
}

.tree li {
  height: 19px;
  padding-left: 19px;
  display: flex;
  align-items: center;
}

.tree .open {
  padding-left: 8px;
}

.twig {
  width: 4px;
  height: 6px;
  margin-right: 7px;
}

.tree span {
  display: flex;
  align-items: center;
  gap: 3px;
  padding: 0 3px 0 1px;
  border: 1px solid transparent;
}

.tree .selected {
  height: 21px;
}

.tree .selected span {
  height: 20px;
  background: #a5c8e6;
  border-color: #6d9cc0;
}

.hscroll {
  height: 16px;
  margin-top: auto;
  display: flex;
  background: #f0f0f0;
}

.hscroll button {
  width: 17px;
  display: flex;
  align-items: center;
  justify-content: center;
}

.track {
  flex: 1;
}

.thumb {
  display: block;
  width: 66px;
  height: 16px;
  background: #cdcdcd;
}

.handle {
  position: absolute;
  top: 270px;
  right: -10px;
  width: 10px;
  height: 39px;
  border: 1px solid #999;
  border-left: 0;
  background: radial-gradient(circle at 3px 19px, #bbb 2px, #fff 3px);
}

/* graphics area */
.viewport {
  flex: 1;
  position: relative;
  border-bottom: 1px solid #888;
}

.crumbs {
  position: absolute;
  left: 11px;
  top: 13px;
  font-size: 10px;
}

.crumb-bar {
  display: flex;
  width: 188px;
  height: 25px;
  border: 1px solid #ccc;
  background: #fafafa;
  line-height: 28px;
}

.crumb {
  margin-left: auto;
}

.crumb-sub {
  display: flex;
  align-items: center;
  gap: 4px;
  margin: 4px 0 0 102px;
}

.sketch {
  display: flex;
  align-items: center;
  gap: 4px;
  height: 24px;
  padding: 0 3px;
  border: 1px solid #ddd;
}

.heads-up {
  position: absolute;
  left: 453px;
  top: 5px;
  display: flex;
  gap: 7px;
}

.heads-up .dd {
  width: 9px;
  color: #999;
}

.doc-window {
  position: absolute;
  right: 8px;
  top: -17px;
  display: flex;
  gap: 7px;
  color: #999;
}

.model {
  position: absolute;
  left: 365px;
  top: 152px;
}

.triad {
  position: absolute;
  left: 19px;
  bottom: 36px;
  font-size: 9px;
}

.view-name {
  position: absolute;
  left: 9px;
  bottom: 1px;
  margin: 0;
  color: #000;
  font: bold 14px/16px Lato, sans-serif;
}

.task-pane {
  position: absolute;
  right: 0;
  top: 60px;
  width: 45px;
  display: flex;
  flex-direction: column;
  border: 1px solid #999;
  border-width: 1px 0 0 1px;
}

.task-pane button {
  height: 40px;
  padding-left: 7px;
  background: #d6d6d6;
  border-bottom: 1px solid #999;
}

.task-pane .active {
  background: #f7f7f7;
}

/* bottom bars */
footer {
  flex: none;
  background: #f7f7f7;
}

.sheets {
  height: 16px;
  display: flex;
  padding-left: 22px;
  font-size: 12px;
  line-height: 16px;
}

.nav-buttons {
  display: flex;
  width: 64px;
  border-top: 1px solid #333;
}

.nav-buttons button {
  flex: 1;
  display: flex;
  align-items: center;
  justify-content: center;
  background: #aaaac2;
  border: 1px solid #9292ac;
}

.sheets .active {
  width: 69px;
  text-align: center;
  padding-left: 3px;
  color: #000;
  font-weight: bold;
}

.study {
  width: 116px;
  padding-left: 11px;
  background: #d1d1d1;
  border-right: 1px solid #aaa;
}

.macro-bar {
  width: 202px;
  height: 41px;
  padding-left: 6px;
  margin-left: 4px;
  display: flex;
  align-items: center;
  border-left: 1px dotted #888;
  border-right: 1px solid #999;
}

.macro-bar button {
  width: 37px;
  padding: 2px 0 0 3px;
}

.macro-bar .record {
  width: 39px;
  height: 37px;
  background: #b0b0b0;
  border: 1px solid #777;
}

.status {
  height: 19px;
  padding: 2px 0 0 1px;
  display: flex;
  align-items: center;
  border-top: 2px solid #c8c8c8;
  border-bottom: 1px solid #888;
  white-space: nowrap;
}

.mode {
  margin-left: auto;
  width: 200px;
}

.units {
  width: 76px;
}

.up {
  margin-right: 22px;
}

/* overlay hint */
.tooltip {
  position: absolute;
  left: 15px;
  top: 171px;
  width: 284px;
  height: 47px;
  padding: 2px 0 0 7px;
  background: #fff;
  border: 1px solid #ccc;
  line-height: 19px;
  white-space: nowrap;
  z-index: 2;
}

.tooltip::before {
  content: "";
  position: absolute;
  left: 15px;
  top: -5px;
  width: 9px;
  height: 9px;
  background: #fff;
  border: 1px solid #ccc;
  border-width: 1px 0 0 1px;
  transform: rotate(45deg);
}

.tooltip b {
  display: block;
  color: #000;
}

.arrow {
  position: absolute;
  left: 45px;
  top: 122px;
  z-index: 3;
}
```
